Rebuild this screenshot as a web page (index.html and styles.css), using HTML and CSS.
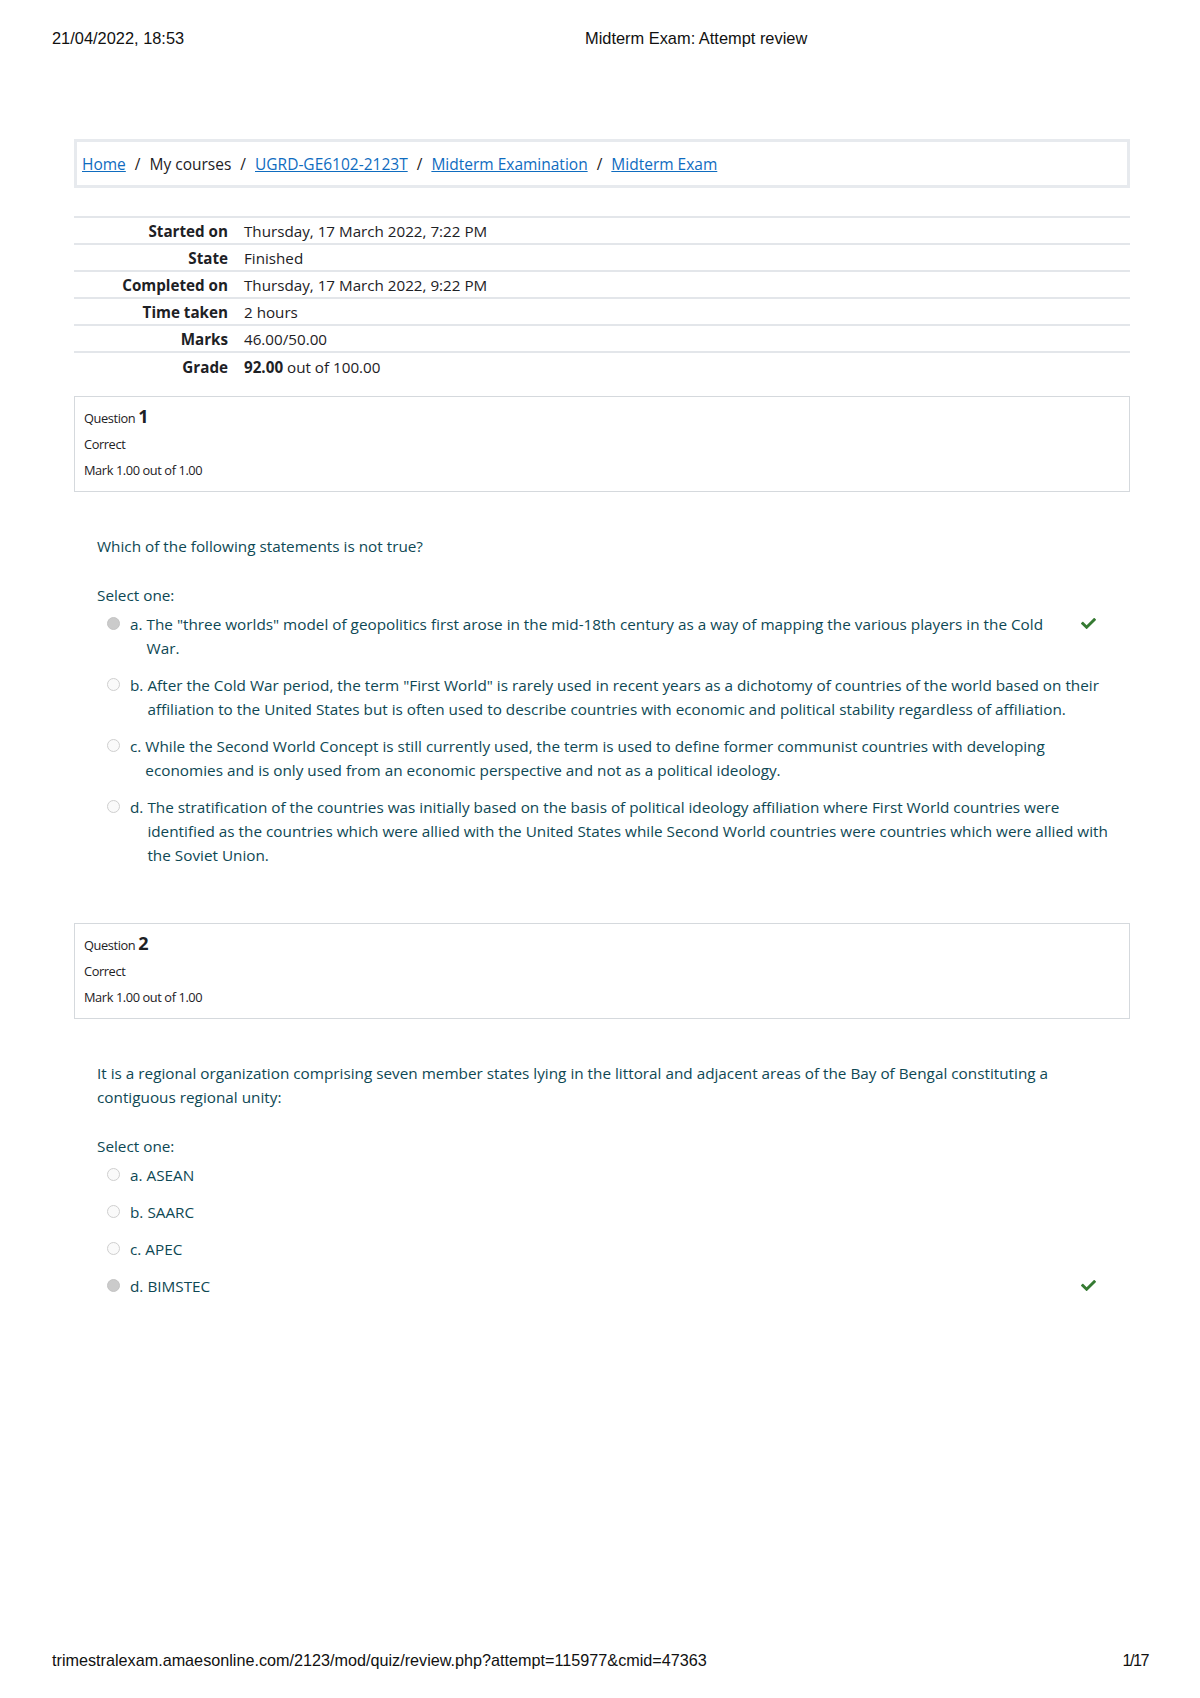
FILE: index.html
```html
<!DOCTYPE html>
<html lang="en">
<head>
    <meta charset="UTF-8">
    <meta name="viewport" content="width=device-width, initial-scale=1.0">
    <title>Midterm Exam: Attempt review</title>
    <link rel="stylesheet" href="styles.css">
</head>
<body>
    <header class="print-header">
        <span>21/04/2022, 18:53</span>
        <span>Midterm Exam: Attempt review</span>
    </header>

    <main class="page">
        <nav class="breadcrumb">
            <a href="#">Home</a>
            <span class="sep">/</span>
            <span>My courses</span>
            <span class="sep">/</span>
            <a href="#">UGRD-GE6102-2123T</a>
            <span class="sep">/</span>
            <a href="#">Midterm Examination</a>
            <span class="sep">/</span>
            <a href="#">Midterm Exam</a>
        </nav>

        <table class="summary">
            <tr><th>Started on</th><td>Thursday, 17 March 2022, 7:22 PM</td></tr>
            <tr><th>State</th><td>Finished</td></tr>
            <tr><th>Completed on</th><td>Thursday, 17 March 2022, 9:22 PM</td></tr>
            <tr><th>Time taken</th><td>2 hours</td></tr>
            <tr><th>Marks</th><td>46.00/50.00</td></tr>
            <tr><th>Grade</th><td><b>92.00</b> out of 100.00</td></tr>
        </table>

        <!-- Question 1 -->
        <div class="que-info">
            <div class="que-no">Question <span class="qno">1</span></div>
            <div>Correct</div>
            <div>Mark 1.00 out of 1.00</div>
        </div>
        <div class="formulation">
            <p class="qtext">Which of the following statements is not true?</p>
            <p class="prompt">Select one:</p>
            <div class="answer">
                <div class="option">
                    <span class="radio checked"></span>
                    <span class="num">a.</span>
                    <div class="label">The "three worlds" model of geopolitics first arose in the mid-18th century as a way of mapping the various players in the Cold War.</div>
                    <svg class="check" viewBox="0 0 512 512"><path d="M173.9 439.4l-166.4-166.4c-10-10-10-26.2 0-36.2l36.2-36.2c10-10 26.2-10 36.2 0L192 312.7 432.1 72.6c10-10 26.2-10 36.2 0l36.2 36.2c10 10 10 26.2 0 36.2L210.1 439.4c-10 10-26.2 10-36.2 0z"/></svg>
                </div>
                <div class="option">
                    <span class="radio"></span>
                    <span class="num">b.</span>
                    <div class="label">After the Cold War period, the term "First World" is rarely used in recent years as a dichotomy of countries of the world based on their affiliation to the United States but is often used to describe countries with economic and political stability regardless of affiliation.</div>
                </div>
                <div class="option">
                    <span class="radio"></span>
                    <span class="num">c.</span>
                    <div class="label">While the Second World Concept is still currently used, the term is used to define former communist countries with developing economies and is only used from an economic perspective and not as a political ideology.</div>
                </div>
                <div class="option">
                    <span class="radio"></span>
                    <span class="num">d.</span>
                    <div class="label">The stratification of the countries was initially based on the basis of political ideology affiliation where First World countries were identified as the countries which were allied with the United States while Second World countries were countries which were allied with the Soviet Union.</div>
                </div>
            </div>
        </div>

        <!-- Question 2 -->
        <div class="que-info">
            <div class="que-no">Question <span class="qno">2</span></div>
            <div>Correct</div>
            <div>Mark 1.00 out of 1.00</div>
        </div>
        <div class="formulation">
            <p class="qtext">It is a regional organization comprising seven member states lying in the littoral and adjacent areas of the Bay of Bengal constituting a contiguous regional unity:</p>
            <p class="prompt">Select one:</p>
            <div class="answer">
                <div class="option">
                    <span class="radio"></span>
                    <span class="num">a.</span>
                    <div class="label">ASEAN</div>
                </div>
                <div class="option">
                    <span class="radio"></span>
                    <span class="num">b.</span>
                    <div class="label">SAARC</div>
                </div>
                <div class="option">
                    <span class="radio"></span>
                    <span class="num">c.</span>
                    <div class="label">APEC</div>
                </div>
                <div class="option">
                    <span class="radio checked"></span>
                    <span class="num">d.</span>
                    <div class="label">BIMSTEC</div>
                    <svg class="check" viewBox="0 0 512 512"><path d="M173.9 439.4l-166.4-166.4c-10-10-10-26.2 0-36.2l36.2-36.2c10-10 26.2-10 36.2 0L192 312.7 432.1 72.6c10-10 26.2-10 36.2 0l36.2 36.2c10 10 10 26.2 0 36.2L210.1 439.4c-10 10-26.2 10-36.2 0z"/></svg>
                </div>
            </div>
        </div>
    </main>

    <footer class="print-footer">
        <span>trimestralexam.amaesonline.com/2123/mod/quiz/review.php?attempt=115977&amp;cmid=47363</span>
        <span class="page-no">1/17</span>
    </footer>
</body>
</html>
```

FILE: styles.css
```css
* {
    margin: 0;
    padding: 0;
    box-sizing: border-box;
}

body {
    width: 1200px;
    min-height: 100vh;
    display: flex;
    flex-direction: column;
    background: white;
    font-family: 'Open Sans', 'Noto Sans', sans-serif;
    font-size: 15.3px;
    color: #1d2125;
}

/* browser print header / footer */
.print-header,
.print-footer {
    display: grid;
    grid-template-columns: 533px 1fr;
    padding: 0 52px;
    font-family: 'Liberation Sans', Arial, sans-serif;
    font-size: 16.4px;
    color: #111;
}

.print-header {
    padding-top: 29px;
}

.print-footer {
    grid-template-columns: 1fr auto;
    margin-top: auto;
    padding-bottom: 28px;
    padding-right: 52px;
    font-size: 16.2px;
}

.print-footer .page-no {
    letter-spacing: -1.5px;
}

.page {
    margin: 91px 70px 0 74px;
}

.breadcrumb {
    display: flex;
    align-items: center;
    gap: 7px;
    height: 49px;
    padding: 0 5px;
    border: 3px solid #e7eaee;
    font-size: 15.5px;
    color: #1d2125;
}

.breadcrumb a {
    color: #0f6cbf;
}

.breadcrumb .sep {
    margin: 0 2px;
}

.summary {
    width: 100%;
    margin-top: 28px;
    border-collapse: collapse;
    font-size: 15.2px;
}

.summary tr {
    border-top: 2px solid #e3e6ea;
    height: 27px;
}

.summary tr:last-child {
    height: 28px;
}

.summary th {
    width: 162px;
    padding-right: 8px;
    text-align: right;
    font-weight: 700;
}

.summary td {
    padding-left: 8px;
}

.que-info {
    margin-top: 16px;
    padding: 6px 9px 8px;
    border: 1px solid #d5d9dd;
    font-size: 12.8px;
    line-height: 26px;
    letter-spacing: -0.4px;
}

.formulation + .que-info {
    margin-top: 0;
}

.que-no .qno {
    font-size: 18px;
    font-weight: 700;
}

.formulation {
    padding: 42px 10px 0 23px;
    color: #0e4854;
    line-height: 24px;
}

.qtext {
    margin-bottom: 25px;
}

.prompt {
    margin-bottom: 5px;
}

.answer {
    padding-bottom: 43px;
}

.option {
    display: flex;
    align-items: flex-start;
    margin-bottom: 13px;
    padding-left: 10px;
}

.radio {
    flex: none;
    width: 13px;
    height: 13px;
    margin-top: 5px;
    margin-right: 10px;
    border: 1px solid #cfcfcf;
    border-radius: 50%;
    background: #fafafa;
}

.radio.checked {
    background: #cbcbcb;
    border-color: #c4c4c4;
}

.num {
    flex: none;
    margin-right: 4px;
}

.label {
    flex: 1;
}

.check {
    flex: none;
    width: 15px;
    height: 15px;
    margin: 4px 24px 0 8px;
    fill: #357a32;
}
```
